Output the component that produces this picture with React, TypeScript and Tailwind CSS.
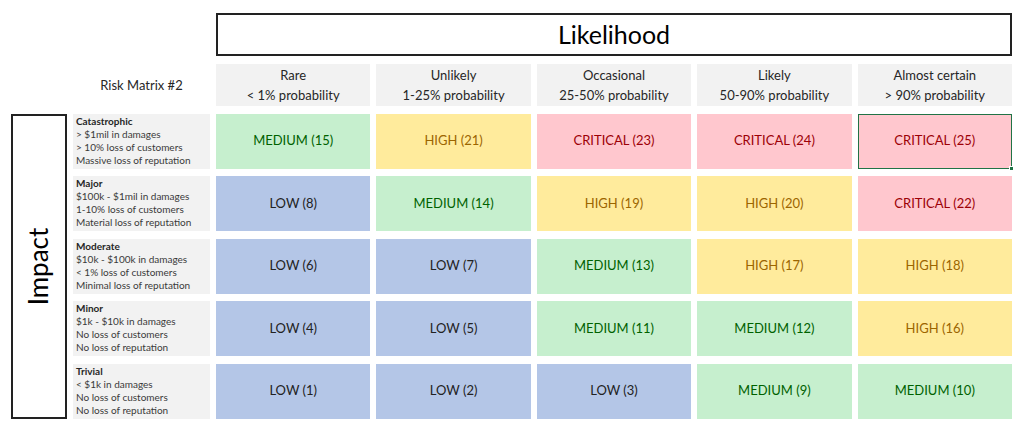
import React from "react";

type Level = "low" | "medium" | "high" | "critical";

const cellStyles: Record<Level, string> = {
  low: "bg-[#b4c6e7] text-[#222222]",
  medium: "bg-[#c6efce] text-[#006100]",
  high: "bg-[#ffeb9c] text-[#9c6500]",
  critical: "bg-[#ffc7ce] text-[#9c0006]",
};

const cols = [
  ["Rare", "< 1% probability"],
  ["Unlikely", "1-25% probability"],
  ["Occasional", "25-50% probability"],
  ["Likely", "50-90% probability"],
  ["Almost certain", "> 90% probability"],
];

const rows: { title: string; lines: string[]; cells: [Level, number][] }[] = [
  {
    title: "Catastrophic",
    lines: ["> $1mil in damages", "> 10% loss of customers", "Massive loss of reputation"],
    cells: [["medium", 15], ["high", 21], ["critical", 23], ["critical", 24], ["critical", 25]],
  },
  {
    title: "Major",
    lines: ["$100k - $1mil in damages", "1-10% loss of customers", "Material loss of reputation"],
    cells: [["low", 8], ["medium", 14], ["high", 19], ["high", 20], ["critical", 22]],
  },
  {
    title: "Moderate",
    lines: ["$10k - $100k in damages", "< 1% loss of customers", "Minimal loss of reputation"],
    cells: [["low", 6], ["low", 7], ["medium", 13], ["high", 17], ["high", 18]],
  },
  {
    title: "Minor",
    lines: ["$1k - $10k in damages", "No loss of customers", "No loss of reputation"],
    cells: [["low", 4], ["low", 5], ["medium", 11], ["medium", 12], ["high", 16]],
  },
  {
    title: "Trivial",
    lines: ["< $1k in damages", "No loss of customers", "No loss of reputation"],
    cells: [["low", 1], ["low", 2], ["low", 3], ["medium", 9], ["medium", 10]],
  },
];

export default function App() {
  return (
    <div
      className="w-[1024px] h-[433px] bg-white overflow-hidden text-[#262626]"
      style={{ fontFamily: "Lato, 'Open Sans', 'Liberation Sans', sans-serif" }}
    >
      <div className="pl-[216px] pt-[13px]">
        <div className="w-[796px] h-[43px] border-2 border-[#222222] flex items-center justify-center text-[25px] text-black">
          Likelihood
        </div>
      </div>
      <div className="pl-[11px] pt-[8px] w-[1012px]">
        <div className="grid grid-cols-[56px_137px_repeat(5,minmax(0,1fr))] grid-rows-[42px_repeat(5,55px)] gap-x-[6px] gap-y-[7.5px]">
          <div />
          <div className="flex items-center justify-center text-[13px] pt-[1px]">Risk Matrix #2</div>
          {cols.map(([a, b]) => (
            <div key={a} className="bg-[#f2f2f2] flex flex-col items-center justify-center text-[13px] leading-[20px]">
              <div>{a}</div>
              <div>{b}</div>
            </div>
          ))}
          <div className="row-span-5 border-2 border-[#222222] flex items-center justify-center">
            <div className="-rotate-90 text-[26px] text-black whitespace-nowrap">Impact</div>
          </div>
          {rows.map((r) => (
            <React.Fragment key={r.title}>
              <div className="bg-[#f2f2f2] pl-[3px] pt-[1px] text-[10px] leading-[13px] text-[#3a3a3a]">
                <div className="font-bold text-[#262626]">{r.title}</div>
                {r.lines.map((l) => (
                  <div key={l}>{l}</div>
                ))}
              </div>
              {r.cells.map(([lvl, n]) => (
                <div
                  key={n}
                  className={`relative flex items-center justify-center text-[13px] ${cellStyles[lvl]} ${
                    n === 25 ? "border border-[#217346]" : ""
                  }`}
                >
                  {lvl.toUpperCase()} ({n})
                  {n === 25 && (
                    <div className="absolute right-[-3px] bottom-[-3px] w-[5px] h-[5px] bg-[#217346] border border-white" />
                  )}
                </div>
              ))}
            </React.Fragment>
          ))}
        </div>
      </div>
    </div>
  );
}
